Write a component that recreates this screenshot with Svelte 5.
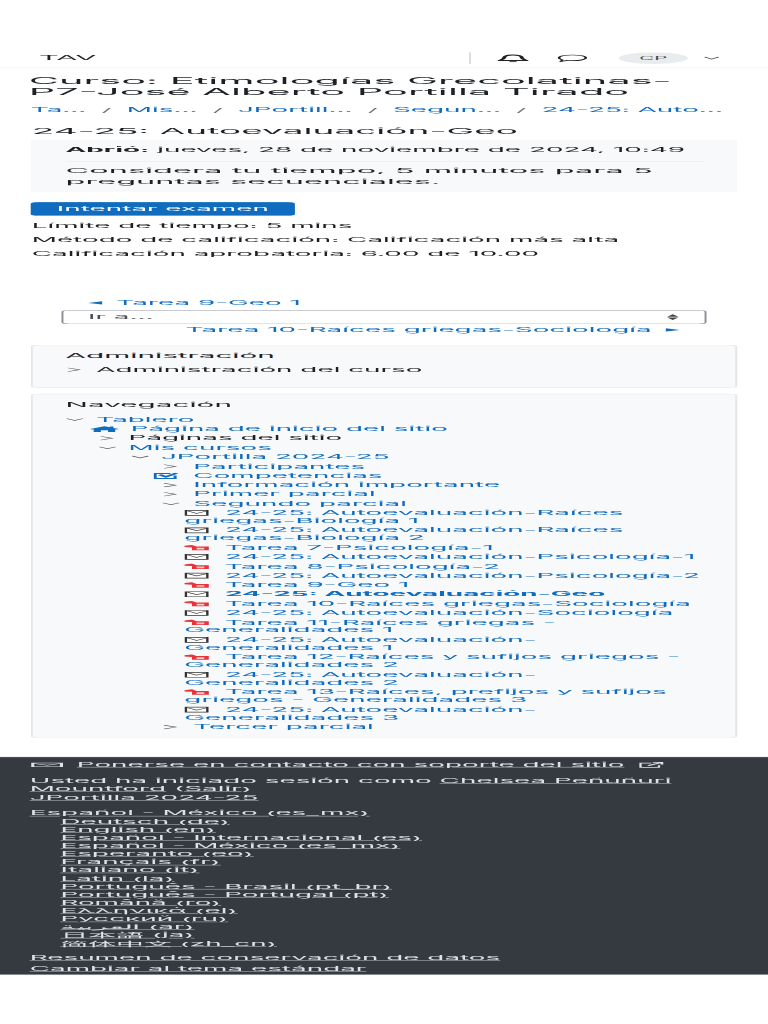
<script>
  const crumbs = ["Ta...", "Mis...", "JPortill...", "Segun...", "24-25: Auto..."];
  const limits = [
    "Límite de tiempo: 5 mins",
    "Método de calificación: Calificación más alta",
    "Calificación aprobatoria: 6.00 de 10.00"
  ];

  // d = depth in the tree, m = marker (open, closed, home, check)
  const branches = [
    { d: 0, m: "open", text: "Tablero", link: true },
    { d: 1, m: "home", text: "Página de inicio del sitio", link: true },
    { d: 1, m: "closed", text: "Páginas del sitio" },
    { d: 1, m: "open", text: "Mis cursos", link: true },
    { d: 2, m: "open", text: "JPortilla 2024-25", link: true },
    { d: 3, m: "closed", text: "Participantes", link: true },
    { d: 3, m: "check", text: "Competencias", link: true },
    { d: 3, m: "closed", text: "Información importante", link: true },
    { d: 3, m: "closed", text: "Primer parcial", link: true },
    { d: 3, m: "open", text: "Segundo parcial", link: true }
  ];

  const activities = [
    ["quiz", "24-25: Autoevaluación-Raíces griegas-Biología 1"],
    ["quiz", "24-25: Autoevaluación-Raíces griegas-Biología 2"],
    ["task", "Tarea 7-Psicología-1"],
    ["quiz", "24-25: Autoevaluación-Psicología-1"],
    ["task", "Tarea 8-Psicología-2"],
    ["quiz", "24-25: Autoevaluación-Psicología-2"],
    ["task", "Tarea 9-Geo 1"],
    ["quiz", "24-25: Autoevaluación-Geo", true],
    ["task", "Tarea 10-Raíces griegas-Sociología"],
    ["quiz", "24-25: Autoevaluación-Sociología"],
    ["task", "Tarea 11-Raíces griegas - Generalidades 1"],
    ["quiz", "24-25: Autoevaluación-Generalidades 1"],
    ["task", "Tarea 12-Raíces y sufijos griegos - Generalidades 2"],
    ["quiz", "24-25: Autoevaluación-Generalidades 2"],
    ["task", "Tarea 13-Raíces, prefijos y sufijos griegos - Generalidades 3"],
    ["quiz", "24-25: Autoevaluación-Generalidades 3"]
  ];

  const languages = [
    "Deutsch ‎(de)‎", "English ‎(en)‎", "Español - Internacional ‎(es)‎",
    "Español - México ‎(es_mx)‎", "Esperanto ‎(eo)‎", "Français ‎(fr)‎",
    "Italiano ‎(it)‎", "Latin ‎(la)‎", "Português - Brasil ‎(pt_br)‎",
    "Português - Portugal ‎(pt)‎", "Română ‎(ro)‎", "Ελληνικά ‎(el)‎",
    "Русский ‎(ru)‎", "العربية ‎(ar)‎", "日本語 ‎(ja)‎", "简体中文 ‎(zh_cn)‎"
  ];
</script>

{#snippet marker(m)}
  {#if m === "open"}
    <svg class="mark" viewBox="0 0 16 16" preserveAspectRatio="none"><path d="M1 5l7 6 7-6" fill="none" stroke="#444" stroke-width="1.500"/></svg>
  {:else if m === "closed"}
    <svg class="mark" viewBox="0 0 16 16" preserveAspectRatio="none"><path d="M2 2l10 6-10 6" fill="none" stroke="#444" stroke-width="1.500"/></svg>
  {:else if m === "home"}
    <svg class="mark home" viewBox="0 0 16 16" preserveAspectRatio="none"><path d="M0 8l8-7 3 2.600V2h2v3.400L16 8l-1.200 1.200L14 8.600V15h-4v-4H6v4H2V8.600l-.8.600z" fill="#0f6cbf"/></svg>
  {:else}
    <svg class="mark check" viewBox="0 0 16 16" preserveAspectRatio="none"><path d="M14 8v7H1V3h10" fill="none" stroke="#0f6cbf" stroke-width="2"/><path d="M4 6l4 5 7-9" fill="none" stroke="#0f6cbf" stroke-width="3"/></svg>
  {/if}
{/snippet}

{#snippet quizIcon()}
  <svg class="act" viewBox="0 0 16 16" preserveAspectRatio="none"><path d="M1 2h14v12H1z" fill="#fff" stroke="#333" stroke-width="1.600"/><path d="M2 3l6 6 7-6" fill="none" stroke="#333" stroke-width="1.200"/></svg>
{/snippet}

{#snippet taskIcon()}
  <svg class="act" viewBox="0 0 16 16" preserveAspectRatio="none"><path d="M0 3l5-2 3 4h8v9H5V7L0 6z" fill="#e8333a"/><path d="M8 8h5v4H8z" fill="#f7c9c9"/></svg>
{/snippet}

<div class="stage">
  <div class="page">
    <header class="topbar">
      <span class="brand">TAV</span>
      <span class="divider"></span>
      <svg class="nav-icon bell" viewBox="0 0 16 16" preserveAspectRatio="none"><path d="M8 2a4.500 4.500 0 0 0-4.500 4.500c0 3.500-1.500 4.500-2.500 6h14c-1-1.500-2.500-2.500-2.500-6A4.500 4.500 0 0 0 8 2z" fill="none" stroke="#222" stroke-width="2"/><path d="M6 14h4a2 2 0 0 1-4 0z" fill="#222"/></svg>
      <svg class="nav-icon chat" viewBox="0 0 16 16" preserveAspectRatio="none"><path d="M8 2c4 0 7 2.300 7 5.500S12 13 8 13c-1 0-2-.1-2.800-.5L2 14.500l.8-3C1.600 10.500 1 9 1 7.500 1 4.300 4 2 8 2z" fill="none" stroke="#222" stroke-width="1.300"/></svg>
      <span class="avatar">CP</span>
      <svg class="caret" viewBox="0 0 16 16" preserveAspectRatio="none"><path d="M2 5l6 6 6-6" fill="none" stroke="#444" stroke-width="1.500"/></svg>
    </header>

    <main class="content">
      <h1>Curso: Etimologías Grecolatinas-P7-José Alberto Portilla Tirado</h1>

      <nav class="crumbs">
        {#each crumbs as crumb, i}
          {#if i > 0}<span class="sep">/</span>{/if}
          <a href="#top">{crumb}</a>
        {/each}
      </nav>

      <h2>24-25: Autoevaluación-Geo</h2>

      <section class="intro">
        <p class="opened"><strong>Abrió:</strong> jueves, 28 de noviembre de 2024, 10:49</p>
        <hr />
        <p class="note">Considera tu tiempo, 5 minutos para 5 preguntas secuenciales.</p>
      </section>

      <button class="attempt">Intentar examen</button>

      <div class="limits">
        {#each limits as line}<p>{line}</p>{/each}
      </div>

      <a class="prev" href="#top">
        <svg class="tri" viewBox="0 0 8 10" preserveAspectRatio="none"><path d="M8 1v8L0 5z" fill="#0f6cbf"/></svg>
        Tarea 9-Geo 1
      </a>
      <div class="jump">
        <span>Ir a...</span>
        <svg viewBox="0 0 10 16" preserveAspectRatio="none"><path d="M5 1l4 6H1zM5 15l4-6H1z" fill="#444"/></svg>
      </div>
      <a class="next" href="#top">
        Tarea 10-Raíces griegas-Sociología
        <svg class="tri" viewBox="0 0 8 10" preserveAspectRatio="none"><path d="M0 1v8l8-4z" fill="#0f6cbf"/></svg>
      </a>

      <section class="block admin">
        <h3>Administración</h3>
        <div class="row">
          {@render marker("closed")}
          <span>Administración del curso</span>
        </div>
      </section>

      <section class="block navigation">
        <h3>Navegación</h3>
        {#each branches as b}
          <div class="row" style="padding-left: {b.d * 15.8}px">
            {@render marker(b.m)}
            {#if b.link}<a href="#top">{b.text}</a>{:else}<span>{b.text}</span>{/if}
          </div>
        {/each}
        <ul class="activities">
          {#each activities as [kind, text, current]}
            <li>
              {#if kind === "quiz"}{@render quizIcon()}{:else}{@render taskIcon()}{/if}
              <a href="#top" class:current>{text}</a>
            </li>
          {/each}
        </ul>
        <div class="row" style="padding-left: 47.4px">
          {@render marker("closed")}
          <a href="#top">Tercer parcial</a>
        </div>
      </section>
    </main>

    <footer class="foot">
      <div class="contact">
        <svg class="mail" viewBox="0 0 16 16" preserveAspectRatio="none"><path d="M1 3h14v10H1z" fill="none" stroke="#dee2e6" stroke-width="1.500"/><path d="M1 4l7 5 7-5" fill="none" stroke="#dee2e6" stroke-width="1.500"/></svg>
        <a href="#top">Ponerse en contacto con soporte del sitio</a>
        <svg class="ext" viewBox="0 0 16 16" preserveAspectRatio="none"><path d="M13 9v5H1V4h7" fill="none" stroke="#dee2e6" stroke-width="1.500"/><path d="M6 10l8-7M9 2h6v5" fill="none" stroke="#dee2e6" stroke-width="2"/></svg>
      </div>
      <p class="session">
        Usted ha iniciado sesión como <a href="#top">Chelsea Peñuñuri Mountford</a> (<a href="#top">Salir</a>)<br />
        <a href="#top">JPortilla 2024-25</a>
      </p>
      <a class="lang-current" href="#top">Español - México ‎(es_mx)‎</a>
      <ul class="langs">
        {#each languages as lang}<li><a href="#top">{lang}</a></li>{/each}
      </ul>
      <a class="foot-link retention" href="#top">Resumen de conservación de datos</a>
      <a class="foot-link theme" href="#top">Cambiar al tema estándar</a>
    </footer>
  </div>
</div>

<style>
  :global(body) {
    margin: 0;
    background: #fff;
  }

  .stage {
    height: 100vh;
    overflow: hidden;
    filter: blur(0.5px);
  }

  /* the capture is stretched wide and squashed flat, so the whole page is too */
  .page {
    box-sizing: border-box;
    width: 375px;
    height: 2467px;
    padding-top: 116px;
    transform: scale(2.048, 0.415);
    transform-origin: 0 0;
    font-family: Inter, "Noto Sans CJK SC", "Noto Sans", sans-serif;
    font-size: 13.6px;
    line-height: 22.5px;
    color: #1d2125;
  }

  a {
    color: #0f6cbf;
    text-decoration: none;
  }

  p {
    margin: 0;
  }

  .topbar {
    display: flex;
    align-items: center;
    box-sizing: border-box;
    height: 48px;
    padding: 0 23px 0 19px;
    border-bottom: 1px solid #eee;
  }

  .brand {
    font-size: 15px;
    flex: 1;
  }

  .divider {
    width: 1px;
    height: 28px;
    background: #ddd;
  }

  .nav-icon {
    width: 15px;
    height: 20px;
    margin-left: 14px;
  }

  .bell {
    margin-left: 13px;
  }

  .avatar {
    width: 34px;
    height: 28px;
    margin-left: 15px;
    border-radius: 50%;
    background: #e9ecef;
    font-size: 10px;
    line-height: 28px;
    text-align: center;
    color: #444;
  }

  .caret {
    width: 9px;
    height: 14px;
    margin-left: 7px;
  }

  .content {
    padding: 0 15px;
    display: flex;
    flex-direction: column;
  }

  h1 {
    margin: 17.5px 0 0 -1px;
    font-size: 20.3px;
    font-weight: 400;
    line-height: 27px;
  }

  .crumbs {
    display: flex;
    justify-content: space-between;
    margin-top: 18px;
    padding-right: 7px;
  }

  .sep {
    color: #6a737b;
  }

  h2 {
    margin: 29px 0 0 0.5px;
    font-size: 18.1px;
    font-weight: 400;
    line-height: 22px;
  }

  .intro {
    box-sizing: border-box;
    height: 126px;
    margin-top: 10px;
    padding: 12.75px 16px 0 17px;
    background: #f8f9fa;
  }

  .intro hr {
    margin: 15.75px 0 0;
    border: 0;
    border-top: 1px solid #e3e5e7;
  }

  .note {
    margin-top: 10px;
    font-size: 15.9px;
    line-height: 26px;
  }

  .attempt {
    align-self: flex-start;
    box-sizing: border-box;
    width: 129px;
    height: 33px;
    margin-top: 24px;
    padding: 0;
    border: 1px solid #0f6cbf;
    border-radius: 4px;
    background: #0f6cbf;
    color: #fff;
    font: inherit;
  }

  .limits {
    margin: 13.75px 0 0 0.5px;
  }

  .limits p {
    margin-bottom: 11.25px;
  }

  .prev {
    margin: 84px 0 0 28px;
  }

  .tri {
    width: 7px;
    height: 10px;
  }

  .prev .tri {
    margin-right: 3px;
  }

  .next .tri {
    margin-left: 3px;
  }

  .jump {
    display: flex;
    align-items: center;
    justify-content: space-between;
    box-sizing: border-box;
    height: 34px;
    margin: 5.5px 15px 0;
    padding: 0 12px;
    border: 1px solid #8f959e;
    border-radius: 4px;
    color: #495057;
  }

  .jump svg {
    width: 7px;
    height: 16px;
  }

  .next {
    align-self: flex-end;
    margin: 3px 28px 0 0;
  }

  .block {
    box-sizing: border-box;
    padding: 15px 16px 0 16px;
    border: 1px solid #e4e6e8;
    border-radius: 4px;
    background: #f8f9fa;
  }

  .admin {
    height: 104px;
    margin-top: 24.5px;
  }

  .navigation {
    height: 829px;
    margin-top: 14px;
  }

  h3 {
    margin: 0 0 10.5px;
    font-size: 14.5px;
    font-weight: 400;
    line-height: 22.5px;
  }

  .navigation h3 {
    margin-bottom: 12.5px;
  }

  .row {
    display: flex;
    align-items: center;
    height: 22.5px;
    white-space: nowrap;
  }

  .mark {
    flex: none;
    width: 9px;
    height: 12px;
    margin-right: 6px;
  }

  .home {
    width: 14px;
    height: 16px;
    margin: 0 6px 0 -4px;
  }

  .check {
    width: 12px;
    height: 16px;
    margin: 0 7px 0 -4px;
  }

  .activities {
    list-style: none;
    margin: 0;
    padding: 0 0 0 58px;
    line-height: 19.5px;
  }

  .activities li {
    padding: 1.5px 0;
  }

  .act {
    width: 12px;
    height: 16px;
    margin-right: 4px;
    vertical-align: -3px;
  }

  .current {
    font-weight: 700;
  }

  .foot {
    box-sizing: border-box;
    height: 525px;
    margin-top: 46px;
    padding: 8px 15px 0 14.5px;
    background: #343a40;
    border-top: 1px solid #6a737b;
    border-bottom: 2px solid #8f959e;
    font-size: 13.6px;
    line-height: 19.6px;
    color: #dee2e6;
  }

  .foot a {
    color: #dee2e6;
    text-decoration: underline;
  }

  .contact {
    display: flex;
    align-items: center;
    gap: 7px;
  }

  .mail {
    width: 16px;
    height: 14px;
  }

  .ext {
    width: 12px;
    height: 16px;
    margin-left: 0;
  }

  .session {
    margin-top: 18px;
    line-height: 20.5px;
  }

  .lang-current {
    display: block;
    margin-top: 19px;
  }

  .langs {
    list-style: none;
    margin: 0;
    padding: 0 0 0 15px;
  }

  .foot-link {
    display: block;
  }

  .retention {
    margin-top: 15px;
  }

  .theme {
    margin-top: 7px;
  }
</style>
